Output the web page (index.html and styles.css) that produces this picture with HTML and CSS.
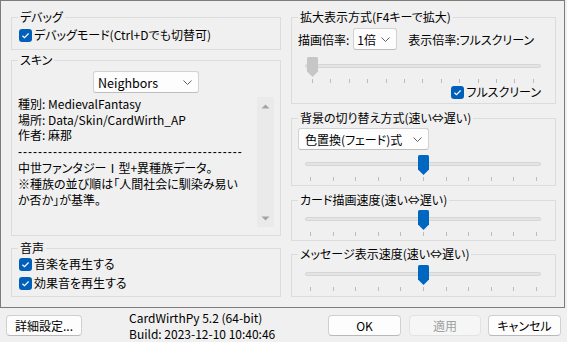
FILE: index.html
```html
<!DOCTYPE html>
<html lang="ja">
<head>
<meta charset="utf-8">
<link rel="stylesheet" href="styles.css">
</head>
<body>
<div class="panel">
  <div class="col">
    <fieldset class="fs fs-debug">
      <legend>デバッグ</legend>
      <label class="check"><svg class="box" width="13" height="13" viewBox="0 0 13 13"><rect x="0" y="0" width="13" height="13" rx="3" fill="#005fb8"/><path d="M3.4 6.7 L5.5 8.7 L9.6 4.5" fill="none" stroke="#fff" stroke-width="1.2"/></svg><span>デバッグモード(Ctrl+Dでも切替可)</span></label>
    </fieldset>
    <fieldset class="fs fs-skin">
      <legend>スキン</legend>
      <div class="select select-skin"><span>Neighbors</span><svg class="chev" width="9" height="5" viewBox="0 0 9 5"><path d="M0.5 0.5 L4.5 4.5 L8.5 0.5" fill="none" stroke="#606060" stroke-width="1"/></svg></div>
      <div class="memo">
        <div class="memo-text">種別: MedievalFantasy<br>場所: Data/Skin/CardWirth_AP<br>作者: 麻那<br><span class="dashes">---------------------------------------------</span><br>中世ファンタジーⅠ型+異種族データ。<br>※種族の並び順は「人間社会に馴染み易い<br>か否か」が基準。</div>
        <div class="scrollbar">
          <svg width="9" height="5" viewBox="0 0 9 5"><path d="M0.5 4.5 L4.5 0.5 L8.5 4.5 Z" fill="#a3a3a3"/></svg>
          <svg width="9" height="5" viewBox="0 0 9 5"><path d="M0.5 0.5 L4.5 4.5 L8.5 0.5 Z" fill="#a3a3a3"/></svg>
        </div>
      </div>
    </fieldset>
    <fieldset class="fs fs-sound">
      <legend>音声</legend>
      <label class="check"><svg class="box" width="13" height="13" viewBox="0 0 13 13"><rect x="0" y="0" width="13" height="13" rx="3" fill="#005fb8"/><path d="M3.4 6.7 L5.5 8.7 L9.6 4.5" fill="none" stroke="#fff" stroke-width="1.2"/></svg><span>音楽を再生する</span></label>
      <label class="check"><svg class="box" width="13" height="13" viewBox="0 0 13 13"><rect x="0" y="0" width="13" height="13" rx="3" fill="#005fb8"/><path d="M3.4 6.7 L5.5 8.7 L9.6 4.5" fill="none" stroke="#fff" stroke-width="1.2"/></svg><span>効果音を再生する</span></label>
    </fieldset>
  </div>
  <div class="col">
    <fieldset class="fs fs-zoom">
      <legend>拡大表示方式(F4キーで拡大)</legend>
      <div class="zoom-row">
        <span>描画倍率:</span>
        <div class="select select-scale"><span>1倍</span><svg class="chev" width="9" height="5" viewBox="0 0 9 5"><path d="M0.5 0.5 L4.5 4.5 L8.5 0.5" fill="none" stroke="#606060" stroke-width="1"/></svg></div>
        <span class="disp">表示倍率:フルスクリーン</span>
      </div>
      <div class="slider">
        <div class="track-row">
          <div class="track"></div>
          <svg class="thumb" style="left:2px" width="11" height="20" viewBox="0 0 11 20"><path d="M0 1.5 Q0 0 1.5 0 H9.5 Q11 0 11 1.5 V14.5 L5.5 20 L0 14.5 Z" fill="#c6c6c6"/></svg>
        </div>
        <div class="ticks ticks-13"><i></i><i></i><i></i><i></i><i></i><i></i><i></i><i></i><i></i><i></i><i></i><i></i><i></i></div>
      </div>
      <div class="full-row">
        <label class="check"><svg class="box" width="13" height="13" viewBox="0 0 13 13"><rect x="0" y="0" width="13" height="13" rx="3" fill="#005fb8"/><path d="M3.4 6.7 L5.5 8.7 L9.6 4.5" fill="none" stroke="#fff" stroke-width="1.2"/></svg><span>フルスクリーン</span></label>
      </div>
    </fieldset>
    <fieldset class="fs fs-bg">
      <legend>背景の切り替え方式(速い⇔遅い)</legend>
      <div class="select select-bg"><span>色置換(フェード)式</span><svg class="chev" width="9" height="5" viewBox="0 0 9 5"><path d="M0.5 0.5 L4.5 4.5 L8.5 0.5" fill="none" stroke="#606060" stroke-width="1"/></svg></div>
      <div class="slider">
        <div class="track-row">
          <div class="track"></div>
          <svg class="thumb" style="left:113px" width="11" height="20" viewBox="0 0 11 20"><path d="M0 1.5 Q0 0 1.5 0 H9.5 Q11 0 11 1.5 V14.5 L5.5 20 L0 14.5 Z" fill="#0067c0"/></svg>
        </div>
        <div class="ticks"><i></i><i></i><i></i><i></i><i></i><i></i><i></i><i></i><i></i><i></i><i></i></div>
      </div>
    </fieldset>
    <fieldset class="fs fs-card">
      <legend>カード描画速度(速い⇔遅い)</legend>
      <div class="slider">
        <div class="track-row">
          <div class="track"></div>
          <svg class="thumb" style="left:113px" width="11" height="20" viewBox="0 0 11 20"><path d="M0 1.5 Q0 0 1.5 0 H9.5 Q11 0 11 1.5 V14.5 L5.5 20 L0 14.5 Z" fill="#0067c0"/></svg>
        </div>
        <div class="ticks"><i></i><i></i><i></i><i></i><i></i><i></i><i></i><i></i><i></i><i></i><i></i></div>
      </div>
    </fieldset>
    <fieldset class="fs fs-msg">
      <legend>メッセージ表示速度(速い⇔遅い)</legend>
      <div class="slider">
        <div class="track-row">
          <div class="track"></div>
          <svg class="thumb" style="left:113px" width="11" height="20" viewBox="0 0 11 20"><path d="M0 1.5 Q0 0 1.5 0 H9.5 Q11 0 11 1.5 V14.5 L5.5 20 L0 14.5 Z" fill="#0067c0"/></svg>
        </div>
        <div class="ticks"><i></i><i></i><i></i><i></i><i></i><i></i><i></i><i></i><i></i><i></i><i></i></div>
      </div>
    </fieldset>
  </div>
</div>
<div class="footer">
  <button class="btn btn-detail">詳細設定...</button>
  <div class="version"><div>CardWirthPy 5.2 (64-bit)</div><div>Build: 2023-12-10 10:40:46</div></div>
  <button class="btn btn-ok">OK</button>
  <button class="btn btn-apply" disabled>適用</button>
  <button class="btn btn-cancel">キャンセル</button>
</div>
</body>
</html>
```
FILE: styles.css
```css
* { box-sizing: border-box; }
html, body { margin: 0; padding: 0; }
body {
  width: 567px;
  height: 342px;
  overflow: hidden;
  background: #f0f0f0;
  color: #000;
  font-family: "Noto Sans CJK JP", "Noto Sans", sans-serif;
  font-size: 12px;
  font-feature-settings: "palt";
}
.panel {
  width: 565px;
  height: 308px;
  border: 1px solid #7c7c7c;
  padding: 9px 8px 10px 10px;
  display: grid;
  grid-template-columns: 270px 265px;
  column-gap: 10px;
}
.col { display: flex; flex-direction: column; }
.fs {
  margin: 0;
  min-width: 0;
  border: 1px solid #dcdcdc;
  padding: 0 6px 4px 6px;
}
.fs legend {
  padding: 0 2px;
  line-height: 14px;
  font-size: 12px;
}
.check {
  display: flex;
  align-items: center;
  height: 14px;
  line-height: 14px;
  white-space: nowrap;
}
.check .box { flex: none; margin-right: 2px; margin-left: 1px; }

.fs-debug { padding-top: 4px; padding-bottom: 7px; }
.fs-skin { margin-top: 3px; padding-top: 4px; padding-bottom: 7px; display: flex; flex-direction: column; }
.fs-sound { margin-top: 5px; padding-top: 2px; padding-bottom: 6px; display: flex; flex-direction: column; gap: 5px; }

.select {
  display: flex;
  align-items: center;
  justify-content: space-between;
  height: 22px;
  border: 1px solid #d2d2d2;
  border-bottom-color: #bdbdbd;
  border-radius: 3px;
  background: #fdfdfd;
  padding: 0 6px 0 4px;
  white-space: nowrap;
}
.select-skin { width: 106px; align-self: center; padding-left: 4px; font-size: 12.5px; }
.select-scale { width: 44px; margin-left: 4px; padding-left: 3px; }
.select-bg { width: 131px; padding-left: 6px; }

.memo {
  margin-top: 3px;
  height: 132px;
  display: flex;
  justify-content: space-between;
}
.memo-text {
  line-height: 15.6px;
  white-space: nowrap;
}
.dashes {
  font-family: "Liberation Sans", sans-serif;
  letter-spacing: 1px;
}
.scrollbar {
  width: 17px;
  margin: 1px 0;
  background: #eaeaea;
  display: flex;
  flex-direction: column;
  align-items: center;
  justify-content: space-between;
  padding: 7px 0 6px;
}

.fs-zoom { padding-top: 4px; padding-bottom: 4px; display: flex; flex-direction: column; }
.zoom-row { display: flex; align-items: center; height: 22px; white-space: nowrap; }
.zoom-row .disp { margin-left: 11px; }
.full-row { margin-top: 2px; display: flex; justify-content: flex-end; padding-right: 8px; }

.fs-bg { margin-top: 7px; padding-top: 3px; padding-bottom: 4px; display: flex; flex-direction: column; }
.fs-bg .slider { margin-top: 5px; }
.fs-card { margin-top: 7px; padding-top: 3px; padding-bottom: 4px; }
.fs-msg { margin-top: 6px; padding-top: 4px; padding-bottom: 5px; }
.fs-zoom .slider { margin-top: 7px; }

.slider {
  height: 26px;
  margin-left: 7px;
  margin-right: 8px;
  display: flex;
  flex-direction: column;
}
.track-row { position: relative; height: 20px; }
.track {
  margin-top: 7px;
  height: 4px;
  background: #e4e4e4;
  border: 1px solid #d6d6d6;
  border-radius: 2px;
}
.thumb { position: absolute; top: 0; }
.ticks {
  margin-top: 2px;
  height: 4px;
  display: flex;
  justify-content: space-between;
  padding: 0 4px 0 5px;
}
.ticks-13 { padding: 0 7px 0 7px; }
.ticks i { display: block; width: 1px; height: 4px; background: #bcbcbc; }

.footer {
  height: 34px;
  display: flex;
  align-items: flex-start;
  padding: 7px 6px 0 6px;
}
.btn {
  height: 21px;
  border: 1px solid #d0d0d0;
  border-bottom-color: #b9b9b9;
  border-radius: 4px;
  background: #fdfdfd;
  font-family: inherit;
  font-size: 12px;
  font-feature-settings: "palt";
  color: #000;
  padding: 0;
  line-height: 18px;
}
.btn-detail { width: 76px; }
.version { margin-left: 47px; margin-top: -5px; line-height: 16px; white-space: nowrap; }
.btn-ok { width: 73px; margin-left: auto; }
.btn-apply { width: 72px; margin-left: 8px; color: #a0a0a0; background: #f6f6f6; border-color: #e3e3e3; }
.btn-cancel { width: 73px; margin-left: 7px; }
```
